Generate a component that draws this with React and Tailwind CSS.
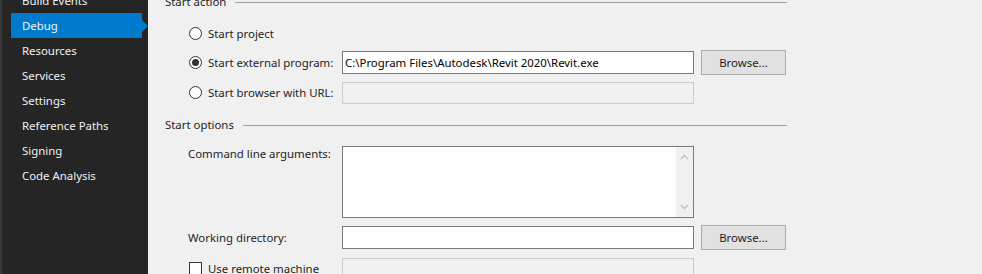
import React from 'react';

const navItems = [
  'Build Events',
  'Debug',
  'Resources',
  'Services',
  'Settings',
  'Reference Paths',
  'Signing',
  'Code Analysis',
];

function Radio({ checked }) {
  return (
    <span className="flex h-[13px] w-[13px] shrink-0 items-center justify-center rounded-full border border-[#333333] bg-white">
      {checked && <span className="h-[7px] w-[7px] rounded-full bg-[#333333]" />}
    </span>
  );
}

function SectionHeader({ title, className }) {
  return (
    <div className={`flex h-[16px] w-[622px] shrink-0 items-center ${className}`}>
      <span className="leading-[16px]">{title}</span>
      <span className="ml-[9px] h-px flex-1 bg-[#a0a0a0]" />
    </div>
  );
}

function BrowseButton() {
  return (
    <button className="ml-[7px] flex h-[25px] w-[85px] shrink-0 items-center justify-center border border-[#adadad] bg-[#e1e1e1] text-[#1e1e1e]">
      Browse...
    </button>
  );
}

export default function App() {
  return (
    <div
      className="flex h-[274px] w-[982px] overflow-hidden bg-[#f0f0f0] text-[11.4px] text-[#1e1e1e]"
      style={{ fontFamily: '"Noto Sans", "Open Sans", sans-serif' }}
    >
      {/* sidebar */}
      <div className="w-[148px] shrink-0 border-l-2 border-[#3a3a3c] bg-[#252526] text-[#f1f1f1]">
        <div className="mt-[-12px] flex flex-col">
          {navItems.map((item) => (
            <div
              key={item}
              className={
                item === 'Debug'
                  ? 'relative ml-[9px] flex h-[25px] w-[131px] shrink-0 items-center bg-[#007acc] pl-[11px]'
                  : 'ml-[9px] flex h-[25px] w-[131px] shrink-0 items-center pl-[11px]'
              }
            >
              {item}
              {item === 'Debug' && (
                <span className="absolute right-[-6px] top-[7px] h-0 w-0 border-y-[6px] border-l-[6px] border-y-transparent border-l-[#007acc]" />
              )}
            </div>
          ))}
        </div>
      </div>

      {/* content */}
      <div className="flex flex-col pl-[17px]">
        <SectionHeader title="Start action" className="mt-[-6px]" />

        <div className="mt-[11px] flex h-[25px] shrink-0 items-center pl-[24px]">
          <Radio />
          <span className="ml-[6px]">Start project</span>
        </div>

        <div className="mt-[4px] flex h-[25px] shrink-0 items-center pl-[24px]">
          <div className="flex w-[153px] items-center">
            <Radio checked />
            <span className="ml-[6px]">Start external program:</span>
          </div>
          <div className="flex h-[23px] w-[352px] items-center border border-[#7a7a7a] bg-white pl-[2px] text-black">
            C:\Program Files\Autodesk\Revit 2020\Revit.exe
          </div>
          <BrowseButton />
        </div>

        <div className="mt-[6px] flex h-[24px] shrink-0 items-center pl-[24px]">
          <div className="flex w-[153px] items-center">
            <Radio />
            <span className="ml-[6px]">Start browser with URL:</span>
          </div>
          <div className="h-[22px] w-[352px] border border-[#cccccc] bg-[#f0f0f0]" />
        </div>

        <SectionHeader title="Start options" className="mt-[12px]" />

        <div className="mt-[13px] flex shrink-0 pl-[23px]">
          <span className="w-[154px] leading-[16px]">Command line arguments:</span>
          <div className="flex h-[72px] w-[352px] justify-end border border-[#7a7a7a] bg-white">
            <div className="flex w-[17px] flex-col items-center justify-between bg-[#f0f0f0] py-[7px]">
              <svg width="9" height="6" viewBox="0 0 9 6">
                <path d="M1 5 L4.5 1.5 L8 5" fill="none" stroke="#c2c2c2" strokeWidth="1.4" />
              </svg>
              <svg width="9" height="6" viewBox="0 0 9 6">
                <path d="M1 1 L4.5 4.5 L8 1" fill="none" stroke="#c2c2c2" strokeWidth="1.4" />
              </svg>
            </div>
          </div>
        </div>

        <div className="mt-[7px] flex h-[25px] shrink-0 items-center pl-[23px]">
          <span className="w-[154px]">Working directory:</span>
          <div className="h-[23px] w-[352px] border border-[#7a7a7a] bg-white" />
          <BrowseButton />
        </div>

        <div className="mt-[6px] flex h-[25px] shrink-0 items-center pl-[24px]">
          <div className="flex w-[153px] items-center">
            <span className="h-[13px] w-[13px] shrink-0 border border-[#333333] bg-white" />
            <span className="ml-[6px]">Use remote machine</span>
          </div>
          <div className="mt-[2px] h-[23px] w-[352px] border border-[#cccccc] bg-[#f0f0f0]" />
        </div>
      </div>
    </div>
  );
}
